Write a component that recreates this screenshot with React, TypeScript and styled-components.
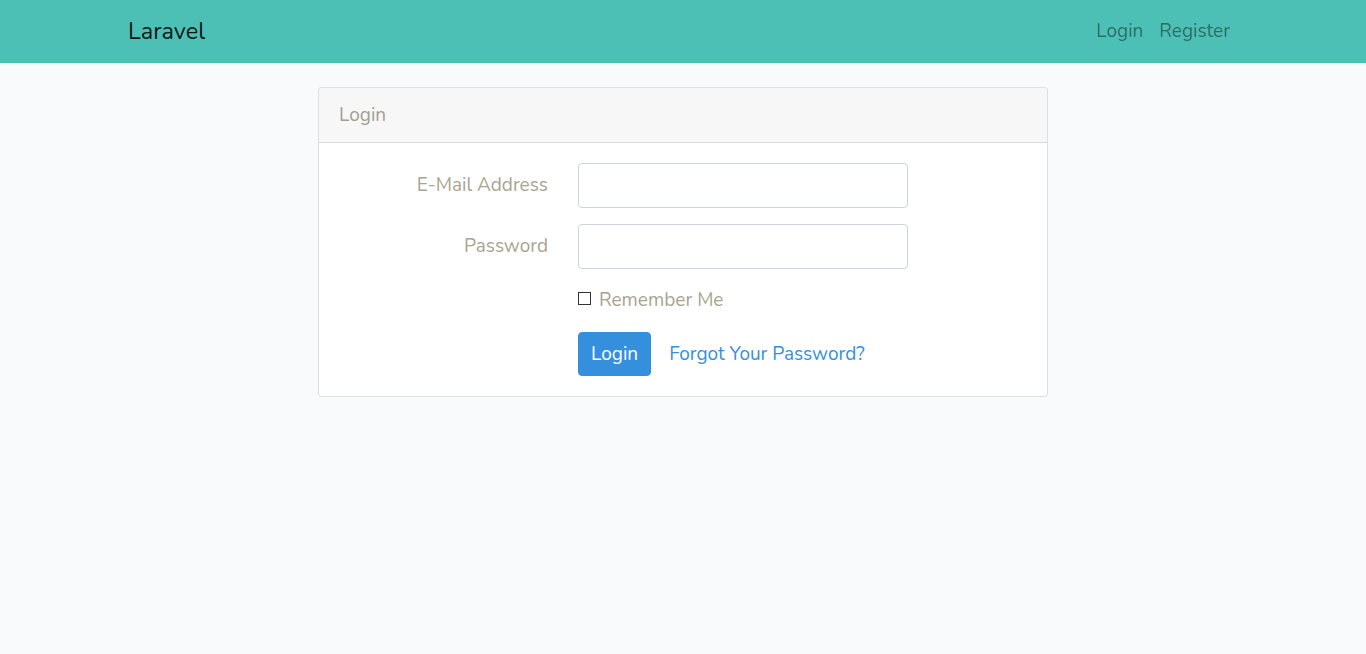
import styled, { createGlobalStyle } from 'styled-components'

const GlobalStyle = createGlobalStyle`
	* {
		box-sizing: border-box;
	}

	body {
		margin: 0;
		background: #f8fafc;
		font-family: 'Nunito', 'Lato', 'Noto Sans', sans-serif;
		font-size: 19px;
		line-height: 1.6;
		color: #a8a58f;
	}
`

const Navbar = styled.nav`
	background: #4dc0b5;
	height: 63px;
`

const NavInner = styled.div`
	max-width: 1140px;
	height: 100%;
	margin: 0 auto;
	padding: 0 15px;
	display: flex;
	align-items: center;
	justify-content: space-between;
`

const Brand = styled.a`
	color: rgba(0, 0, 0, 0.9);
	font-size: 23.5px;
	text-decoration: none;
`

const NavList = styled.ul`
	display: flex;
	list-style: none;
	margin: 0;
	padding: 0;
`

const NavLink = styled.a`
	display: block;
	padding: 8px;
	color: rgba(0, 0, 0, 0.45);
	text-decoration: none;
`

const Main = styled.main`
	padding: 24px 0;
`

const Card = styled.div`
	width: 730px;
	margin: 0 auto;
	background: #fff;
	border: 1px solid rgba(0, 0, 0, 0.125);
	border-radius: 4px;
`

const CardHeader = styled.div`
	padding: 12px 20px;
	background: #f7f7f7;
	border-bottom: 1px solid rgba(0, 0, 0, 0.125);
	border-radius: 3px 3px 0 0;
	color: #a19e94;
	line-height: 30px;
`

const CardBody = styled.div`
	padding: 20px 20px 20px 19px;
`

const FormRow = styled.div<{ $mb?: number }>`
	display: grid;
	grid-template-columns: 240px 360px;
	align-items: center;
	margin: 0 -15px ${p => p.$mb ?? 16}px;
`

const Label = styled.label`
	padding: 0 15px;
	text-align: right;
	color: #a8a58f;
`

const Field = styled.div`
	grid-column: 2;
	display: flex;
	align-items: center;
	padding: 0 15px;
`

const Input = styled.input`
	width: 100%;
	height: 45px;
	padding: 6px 12px;
	border: 1px solid #ced4da;
	border-radius: 4px;
	background: #fff;
	font: inherit;
`

const CheckBox = styled.span`
	width: 13px;
	height: 13px;
	margin: 0 8px 4px 0;
	border: 1px solid #333;
	background: #fff;
`

const CheckLabel = styled.span`
	line-height: 31px;
	color: #a8a58f;
`

const Button = styled.button`
	height: 44px;
	padding: 0 12px;
	background: #3490dc;
	border: 1px solid #3490dc;
	border-radius: 4px;
	color: #fff;
	font: inherit;
`

const ForgotLink = styled.a`
	margin-left: 18px;
	color: #3490dc;
	text-decoration: none;
`

export default function App() {
	return (
		<>
			<GlobalStyle />
			<Navbar>
				<NavInner>
					<Brand href='#'>Laravel</Brand>
					<NavList>
						<li><NavLink href='#'>Login</NavLink></li>
						<li><NavLink href='#'>Register</NavLink></li>
					</NavList>
				</NavInner>
			</Navbar>
			<Main>
				<Card>
					<CardHeader>Login</CardHeader>
					<CardBody>
						<FormRow>
							<Label>E-Mail Address</Label>
							<Field><Input type='email' /></Field>
						</FormRow>
						<FormRow>
							<Label>Password</Label>
							<Field><Input type='password' /></Field>
						</FormRow>
						<FormRow>
							<Field>
								<CheckBox />
								<CheckLabel>Remember Me</CheckLabel>
							</Field>
						</FormRow>
						<FormRow $mb={0}>
							<Field>
								<Button>Login</Button>
								<ForgotLink href='#'>Forgot Your Password?</ForgotLink>
							</Field>
						</FormRow>
					</CardBody>
				</Card>
			</Main>
		</>
	)
}
